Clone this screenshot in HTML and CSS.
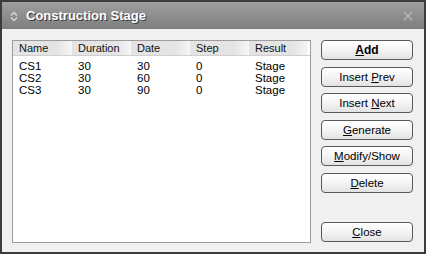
FILE: index.html
```html
<!DOCTYPE html>
<html>
<head>
<meta charset="utf-8">
<link rel="stylesheet" href="styles.css">
</head>
<body>
<div class="window">
  <div class="titlebar">
    <svg class="ticon" width="8" height="11" viewBox="0 0 8 11">
      <polyline points="1,4.5 4,1.5 7,4.5" fill="none" stroke="#d8d8d8" stroke-width="1.4"/>
      <polyline points="1,6.5 4,9.5 7,6.5" fill="none" stroke="#d8d8d8" stroke-width="1.4"/>
    </svg>
    <span class="title">Construction Stage</span>
    <svg class="tclose" width="10" height="10" viewBox="0 0 10 10">
      <path d="M1.5 1.5 L8.5 8.5 M8.5 1.5 L1.5 8.5" stroke="#b4b4b4" stroke-width="1.6" fill="none"/>
      <path d="M0.5 1 H3 M7 1 H9.5 M0.5 9 H3 M7 9 H9.5" stroke="#a8a8a8" stroke-width="1" fill="none"/>
    </svg>
  </div>
  <div class="content">
    <div class="list">
      <div class="head">
        <div class="hc">Name</div>
        <div class="hc">Duration</div>
        <div class="hc">Date</div>
        <div class="hc">Step</div>
        <div class="hc">Result</div>
      </div>
      <div class="rows">
        <div class="row"><span>CS1</span><span>30</span><span>30</span><span>0</span><span>Stage</span></div>
        <div class="row"><span>CS2</span><span>30</span><span>60</span><span>0</span><span>Stage</span></div>
        <div class="row"><span>CS3</span><span>30</span><span>90</span><span>0</span><span>Stage</span></div>
      </div>
    </div>
    <div class="buttons">
      <button class="btn bold"><u>A</u>dd</button>
      <button class="btn">Insert <u>P</u>rev</button>
      <button class="btn">Insert <u>N</u>ext</button>
      <button class="btn"><u>G</u>enerate</button>
      <button class="btn"><u>M</u>odify/Show</button>
      <button class="btn"><u>D</u>elete</button>
      <button class="btn close"><u>C</u>lose</button>
    </div>
  </div>
</div>
</body>
</html>
```
FILE: styles.css
```css
html, body {
  margin: 0;
  padding: 0;
  background: #f0f0f0;
}
.window {
  width: 426px;
  height: 254px;
  box-sizing: border-box;
  border: 2px solid #3c3c3c;
  background: #f0f0f0;
  display: flex;
  flex-direction: column;
  font-family: "Liberation Sans", Arial, sans-serif;
}
.titlebar {
  height: 27px;
  background: linear-gradient(#9e9e9e, #7e7e7e);
  display: flex;
  align-items: center;
  padding-left: 8px;
  padding-right: 11px;
}
.ticon {
  margin-right: 8px;
  margin-top: 1px;
}
.title {
  color: #ffffff;
  font-weight: bold;
  font-size: 13px;
  text-shadow: 1px 1px 0 #3a3a3a;
  flex: 1;
  margin-top: -1px;
}
.tclose {
  margin-top: 1px;
}
.content {
  flex: 1;
  display: flex;
  padding: 11px 11px 9px 10px;
}
.list {
  width: 299px;
  box-sizing: border-box;
  border: 1px solid #9c9c9c;
  background: #ffffff;
  font-size: 11px;
  color: #000;
}
.head {
  display: flex;
  height: 14px;
  border-bottom: 1px solid #d0d0d0;
}
.hc {
  width: 59px;
  box-sizing: border-box;
  padding-left: 6px;
  line-height: 14px;
  color: #111;
  background: linear-gradient(to right, #e4e4e4 0%, #e4e4e4 75%, #f6f6f6 100%);
}
.rows {
  padding-top: 4px;
}
.row {
  display: flex;
  line-height: 12px;
  height: 12px;
  font-size: 11.5px;
}
.row span {
  width: 59px;
  padding-left: 6px;
  box-sizing: border-box;
}
.buttons {
  margin-left: 10px;
  width: 92px;
  display: flex;
  flex-direction: column;
  gap: 6.6px;
}
.btn {
  height: 20px;
  width: 92px;
  box-sizing: border-box;
  border: 1px solid #5a5a5a;
  border-radius: 4px;
  background: linear-gradient(#ffffff 0%, #f4f4f4 50%, #e2e2e2 100%);
  font-family: "Liberation Sans", Arial, sans-serif;
  font-size: 11.5px;
  color: #000;
  padding: 0;
  margin: 0;
}
.btn.bold {
  font-weight: bold;
  font-size: 12px;
}
.btn.close {
  margin-top: auto;
  margin-bottom: 1px;
}
```
